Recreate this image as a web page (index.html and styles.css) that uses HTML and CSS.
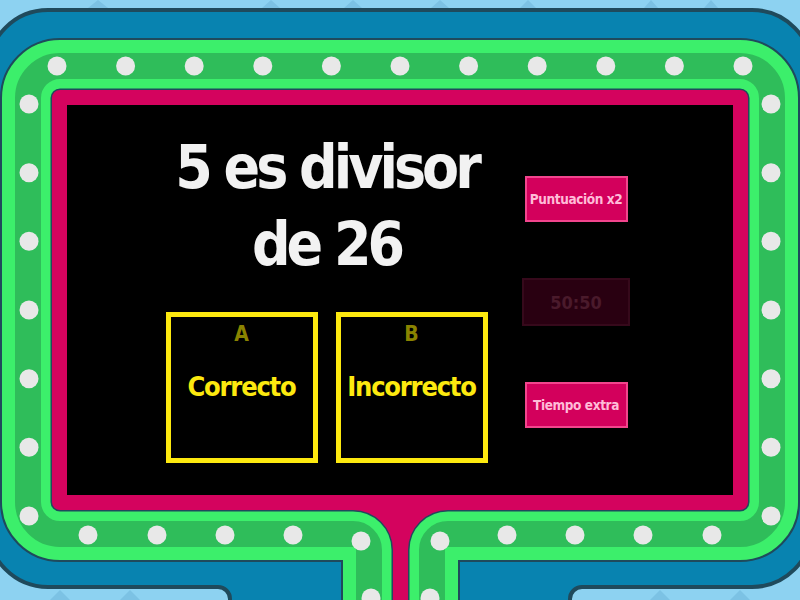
FILE: index.html
```html
<!DOCTYPE html>
<html lang="es">
<head>
<meta charset="utf-8">
<title>5 es divisor de 26</title>
<link rel="stylesheet" href="styles.css">
</head>
<body>
<div class="stage">
  <svg class="art" viewBox="0 0 800 600" width="800" height="600" aria-hidden="true">
    <defs>
      <path id="screenEdge" d="M 60 90 H 740 A 8 8 0 0 1 748 98 V 502 A 8 8 0 0 1 740 510 H 448 A 40 40 0 0 0 408 550 V 660 H 393 V 550 A 40 40 0 0 0 353 510 H 60 A 8 8 0 0 1 52 502 V 98 A 8 8 0 0 1 60 90 Z"/>
    </defs>
    <rect x="0" y="0" width="800" height="600" fill="#8dd2f1"/>
    <g fill="#7cc2e4">
      <polygon points="88,8 98,0 108,8"/>
      <polygon points="262,8 271,0 280,8"/>
      <polygon points="344,8 353,0 362,8"/>
      <polygon points="431,8 440,0 449,8"/>
      <polygon points="520,8 528,0 536,8"/>
      <polygon points="644,8 651,0 658,8"/>
      <polygon points="704,8 711,0 718,8"/>
      <polygon points="50,600 60,590 70,600"/>
      <polygon points="120,600 130,590 140,600"/>
      <polygon points="650,600 660,590 670,600"/>
      <polygon points="730,600 740,590 750,600"/>
    </g>
    <path d="M 48 10 H 752 A 60 60 0 0 1 812 70 V 527 A 60 60 0 0 1 752 587 H 582 A 12 12 0 0 0 570 599 V 640 H 230 V 599 A 12 12 0 0 0 218 587 H 48 A 60 60 0 0 1 -12 527 V 70 A 60 60 0 0 1 48 10 Z" fill="#0883b0" stroke="#1f4a5c" stroke-width="4"/>
    <use href="#screenEdge" fill="none" stroke="#1f4a5c" stroke-width="104" stroke-linejoin="round"/>
    <use href="#screenEdge" fill="none" stroke="#3cef6b" stroke-width="100" stroke-linejoin="round"/>
    <use href="#screenEdge" fill="none" stroke="#2fbd5a" stroke-width="74" stroke-linejoin="round"/>
    <use href="#screenEdge" fill="none" stroke="#3cef6b" stroke-width="22" stroke-linejoin="round"/>
    <use href="#screenEdge" fill="none" stroke="#1f4a5c" stroke-width="3" stroke-linejoin="round"/>
    <use href="#screenEdge" fill="#d4035e"/>
    <g fill="#e8e8e8">
      <circle cx="57" cy="66" r="9.5"/>
      <circle cx="125.6" cy="66" r="9.5"/>
      <circle cx="194.2" cy="66" r="9.5"/>
      <circle cx="262.8" cy="66" r="9.5"/>
      <circle cx="331.4" cy="66" r="9.5"/>
      <circle cx="400" cy="66" r="9.5"/>
      <circle cx="468.6" cy="66" r="9.5"/>
      <circle cx="537.2" cy="66" r="9.5"/>
      <circle cx="605.8" cy="66" r="9.5"/>
      <circle cx="674.4" cy="66" r="9.5"/>
      <circle cx="743" cy="66" r="9.5"/>
      <circle cx="29" cy="104" r="9.5"/>
      <circle cx="29" cy="172.7" r="9.5"/>
      <circle cx="29" cy="241.3" r="9.5"/>
      <circle cx="29" cy="310" r="9.5"/>
      <circle cx="29" cy="378.7" r="9.5"/>
      <circle cx="29" cy="447.3" r="9.5"/>
      <circle cx="29" cy="516" r="9.5"/>
      <circle cx="771" cy="104" r="9.5"/>
      <circle cx="771" cy="172.7" r="9.5"/>
      <circle cx="771" cy="241.3" r="9.5"/>
      <circle cx="771" cy="310" r="9.5"/>
      <circle cx="771" cy="378.7" r="9.5"/>
      <circle cx="771" cy="447.3" r="9.5"/>
      <circle cx="771" cy="516" r="9.5"/>
      <circle cx="88" cy="535" r="9.5"/>
      <circle cx="157" cy="535" r="9.5"/>
      <circle cx="225" cy="535" r="9.5"/>
      <circle cx="293" cy="535" r="9.5"/>
      <circle cx="361" cy="541" r="9.5"/>
      <circle cx="371" cy="598" r="9.5"/>
      <circle cx="440" cy="541" r="9.5"/>
      <circle cx="430" cy="598" r="9.5"/>
      <circle cx="507" cy="535" r="9.5"/>
      <circle cx="575" cy="535" r="9.5"/>
      <circle cx="643" cy="535" r="9.5"/>
      <circle cx="712" cy="535" r="9.5"/>
    </g>
  </svg>

  <main class="screen">
    <section class="main">
      <h1 class="question">5 es divisor<br>de 26</h1>
      <div class="answers">
        <div class="answer">
          <span class="letter">A</span>
          <span class="word">Correcto</span>
        </div>
        <div class="answer">
          <span class="letter">B</span>
          <span class="word">Incorrecto</span>
        </div>
      </div>
    </section>
    <aside class="powerups">
      <div class="powerup">Puntuación x2</div>
      <div class="powerup used">50:50</div>
      <div class="powerup">Tiempo extra</div>
    </aside>
  </main>
</div>
</body>
</html>
```
FILE: styles.css
```css
html, body {
  margin: 0;
  padding: 0;
}

body {
  background: #8dd2f1;
  overflow: hidden;
  font-family: "DejaVu Sans Condensed", "DejaVu Sans", sans-serif;
}

.stage {
  position: relative;
  width: 800px;
  height: 600px;
  box-sizing: border-box;
  padding: 105px 0 0 67px;
  overflow: hidden;
}

.art {
  position: absolute;
  left: 0;
  top: 0;
  display: block;
}

.screen {
  position: relative;
  width: 666px;
  height: 390px;
  background: #000;
  display: flex;
}

.main {
  width: 391px;
  margin-left: 64px;
  padding-top: 24px;
  display: flex;
  flex-direction: column;
  align-items: center;
}

.question {
  margin: 0;
  font-size: 60px;
  line-height: 77px;
  font-weight: bold;
  letter-spacing: -4px;
  color: #f2f2f2;
  text-align: center;
  white-space: nowrap;
}

.answers {
  display: flex;
  gap: 18px;
  margin-top: 29px;
}

.answer {
  width: 152px;
  height: 151px;
  box-sizing: border-box;
  border: 5px solid #fde90f;
  padding-top: 7px;
  display: flex;
  flex-direction: column;
  align-items: center;
}

.letter {
  font-size: 21px;
  line-height: 21px;
  font-weight: bold;
  color: #8a8300;
}

.word {
  margin-top: 28px;
  font-size: 27px;
  line-height: 27px;
  font-weight: bold;
  letter-spacing: -1.2px;
  color: #fde90f;
  white-space: nowrap;
}

.powerups {
  width: 108px;
  padding-top: 71px;
  display: flex;
  flex-direction: column;
  align-items: center;
}

.powerup {
  width: 103px;
  height: 46px;
  box-sizing: border-box;
  background: #d3005c;
  border: 2px solid #f2458d;
  color: #ffbcd8;
  font-size: 13.5px;
  font-weight: bold;
  letter-spacing: -0.4px;
  display: flex;
  align-items: center;
  justify-content: center;
  white-space: nowrap;
}

.powerup + .powerup {
  margin-top: 56px;
}

.powerup.used {
  width: 108px;
  height: 48px;
  background: #290011;
  border-color: #36091b;
  color: #4a1a2b;
  font-size: 18px;
  letter-spacing: 0;
}
```
